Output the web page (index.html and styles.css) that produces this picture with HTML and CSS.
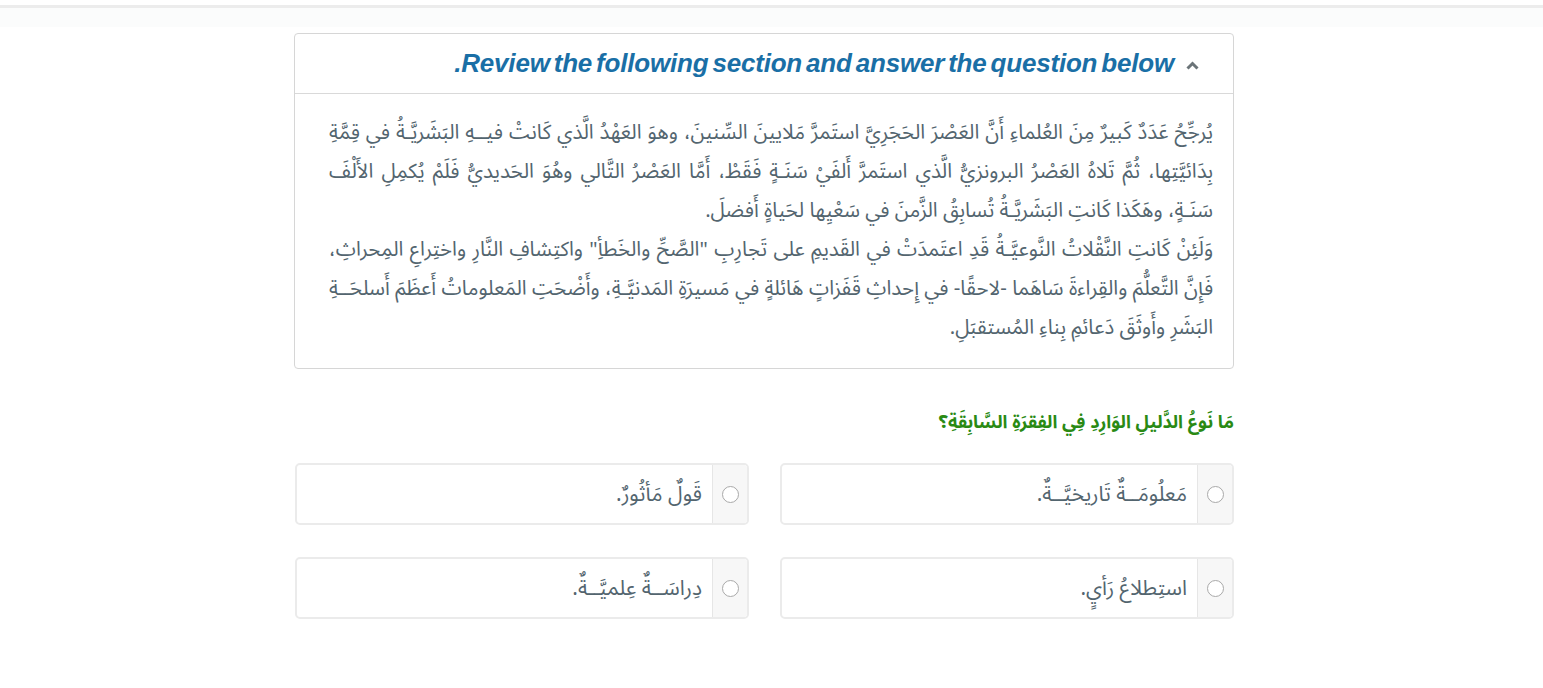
FILE: index.html
```html
<!DOCTYPE html>
<html lang="ar">
<head>
<meta charset="utf-8">
<link rel="stylesheet" href="styles.css">
</head>
<body>
<div class="topbar"></div>
<div class="page">
  <div class="container">
    <div class="card">
      <div class="card-head">
        <svg class="chev" width="15" height="11" viewBox="0 0 15 11"><path d="M2.5 8.5 L7.5 3.5 L12.5 8.5" fill="none" stroke="#6b7478" stroke-width="3"/></svg>
        <span class="title">Review the following section and answer the question below.</span>
      </div>
      <div class="card-body">
        <p>يُرجِّحُ عَدَدٌ كَبيرٌ مِنَ العُلماءِ أَنَّ العَصْرَ الحَجَرِيَّ استَمرَّ مَلايينَ السِّنينَ، وهوَ العَهْدُ الَّذي كَانتْ فيــهِ البَشَريَّـةُ في قِمَّةِ بِدَائيَّتِها، ثُمَّ تَلاهُ العَصْرُ البرونزيُّ الَّذي استَمرَّ أَلفَيْ سَنَـةٍ فَقَطْ، أَمَّا العَصْرُ التَّالي وهُوَ الحَديديُّ فَلَمْ يُكمِلِ الأَلْفَ سَنَـةٍ، وهَكَذا كَانتِ البَشَريَّـةُ تُسابِقُ الزَّمنَ في سَعْيِها لحَياةٍ أَفضلَ.<br>وَلَئِنْ كَانتِ النَّقْلاتُ النَّوعيَّـةُ قَدِ اعتَمدَتْ في القَديمِ على تَجارِبِ "الصَّحِّ والخَطأِ" واكتِشافِ النَّارِ واختِراعِ المِحراثِ، فَإِنَّ التَّعلُّمَ والقِراءةَ سَاهَما -لاحقًا- في إِحداثِ قَفَزاتٍ هَائلةٍ في مَسيرَةِ المَدنيَّـةِ، وأَضْحَتِ المَعلوماتُ أَعظَمَ أَسلحَــةِ البَشَرِ وأَوثَقَ دَعائمِ بِناءِ المُستقبَلِ.</p>
      </div>
    </div>

    <h3 class="question">مَا نَوعُ الدَّليلِ الوَارِدِ فِي الفِقرَةِ السَّابِقَةِ؟</h3>

    <div class="options">
      <label class="opt"><span class="addon"><span class="radio"></span></span><span class="opt-text">مَعلُومَــةٌ تَاريخيَّــةٌ.</span></label>
      <label class="opt"><span class="addon"><span class="radio"></span></span><span class="opt-text">قَولٌ مَأثُورٌ.</span></label>
      <label class="opt"><span class="addon"><span class="radio"></span></span><span class="opt-text">استِطلاعُ رَأيٍ.</span></label>
      <label class="opt"><span class="addon"><span class="radio"></span></span><span class="opt-text">دِراسَــةٌ عِلميَّــةٌ.</span></label>
    </div>
  </div>
</div>
</body>
</html>
```

FILE: styles.css
```css
* { box-sizing: border-box; }
html, body { margin: 0; padding: 0; background: #fff; }
body { font-family: "Noto Sans Arabic", "DejaVu Sans", "Noto Sans", sans-serif; }

.topbar {
  height: 22px;
  margin-top: 5px;
  border-top: 3px solid #ececec;
  background: #fbfcfc;
}

.page { width: calc(100% - 15px); }
.container { width: 940px; margin: 6px auto 0; }

.card {
  border: 1px solid #d6d6d6;
  border-radius: 4px;
  background: #fff;
}
.card-head {
  height: 60px;
  border-bottom: 1px solid #d9d9d9;
  direction: rtl;
  display: flex;
  align-items: center;
  padding-right: 33px;
  gap: 11px;
}
.chev { flex: none; margin-top: 3px; }
.title {
  direction: rtl;
  font-family: "Liberation Sans", Arial, sans-serif;
  font-weight: bold;
  font-style: italic;
  font-size: 26px;
  letter-spacing: -0.2px;
  word-spacing: -3px;
  color: #1a6fa6;
}
.card-body {
  direction: rtl;
  padding: 19px 20px 21px 34px;
}
.card-body p {
  margin: 0;
  font-size: 20.4px;
  line-height: 39px;
  color: #53656f;
  text-align: justify;
}

.question {
  direction: rtl;
  margin: 40px 0 0;
  font-size: 18px;
  font-weight: bold;
  color: #2a8a14;
  line-height: 26px;
}

.options {
  direction: rtl;
  display: grid;
  grid-template-columns: 1fr 1fr;
  column-gap: 31px;
  row-gap: 32px;
  margin-top: 28px;
  padding-left: 1px;
}
.opt {
  display: flex;
  height: 62px;
  border: 2px solid #ebebeb;
  border-radius: 5px;
  overflow: hidden;
  background: #fff;
}
.addon {
  flex: none;
  width: 35px;
  background: #f7f7f7;
  border-left: 1px solid #e6e6e6;
  display: flex;
  align-items: center;
  justify-content: center;
}
.radio {
  width: 17px;
  height: 17px;
  border: 1px solid #a9a9a9;
  border-radius: 50%;
  background: #fff;
}
.opt-text {
  display: flex;
  align-items: center;
  padding-right: 10px;
  font-size: 21px;
  color: #53656f;
}
```
